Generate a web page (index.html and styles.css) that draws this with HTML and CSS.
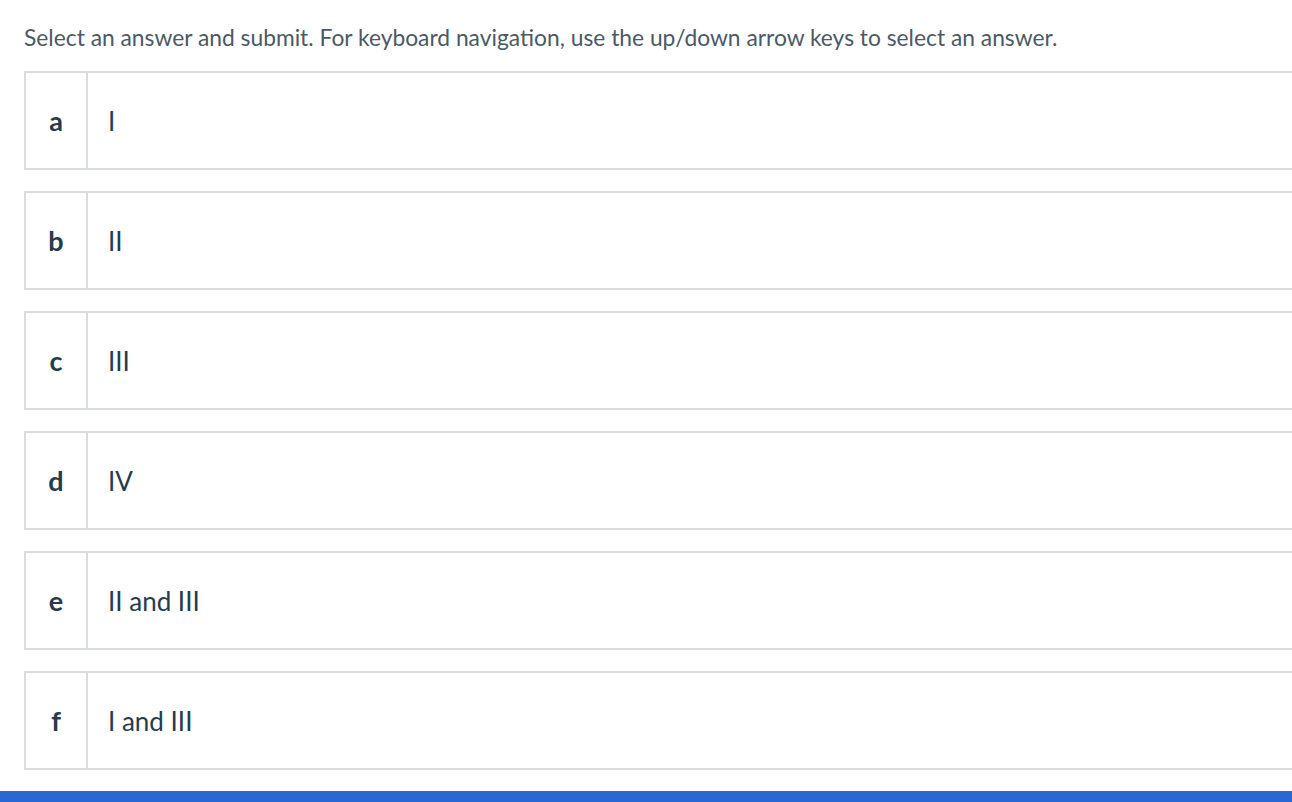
FILE: index.html
```html
<!DOCTYPE html>
<html lang="en">
<head>
    <meta charset="UTF-8">
    <title>Select an answer</title>
    <link rel="stylesheet" href="styles.css">
</head>
<body>
    <div class="question">
        <p class="hint">Select an answer and submit. For keyboard navigation, use the up/down arrow keys to select an answer.</p>
        <div class="answers">
            <div class="answer"><span class="letter">a</span><span class="text">I</span></div>
            <div class="answer"><span class="letter">b</span><span class="text">II</span></div>
            <div class="answer"><span class="letter">c</span><span class="text">III</span></div>
            <div class="answer"><span class="letter">d</span><span class="text">IV</span></div>
            <div class="answer"><span class="letter">e</span><span class="text">II and III</span></div>
            <div class="answer"><span class="letter">f</span><span class="text">I and III</span></div>
            <div class="submit-bar"></div>
        </div>
    </div>
</body>
</html>
```

FILE: styles.css
```css
html, body {
    margin: 0;
    padding: 0;
    overflow: hidden;
    background: #fff;
}

body {
    font-family: Lato, "Open Sans", sans-serif;
    color: #273b4c;
}

.question {
    padding: 22px 0 0 24px;
}

.hint {
    margin: 0 0 19px 0;
    font-size: 22.8px;
    line-height: 30px;
    color: #4b5965;
}

.answers {
    display: flex;
    flex-direction: column;
    gap: 21px;
}

.answer {
    display: flex;
    width: 1300px;
    height: 99px;
    box-sizing: border-box;
    border: 2px solid #d9dde1;
    align-items: stretch;
}

.letter {
    width: 60px;
    flex: none;
    display: flex;
    align-items: center;
    justify-content: center;
    border-right: 2px solid #d9dde1;
    font-size: 27px;
    font-weight: bold;
}

.text {
    display: flex;
    align-items: center;
    padding-left: 20px;
    font-size: 26px;
}

.submit-bar {
    width: 1300px;
    margin-left: -24px;
    height: 60px;
    background: #2868d2;
}
```
